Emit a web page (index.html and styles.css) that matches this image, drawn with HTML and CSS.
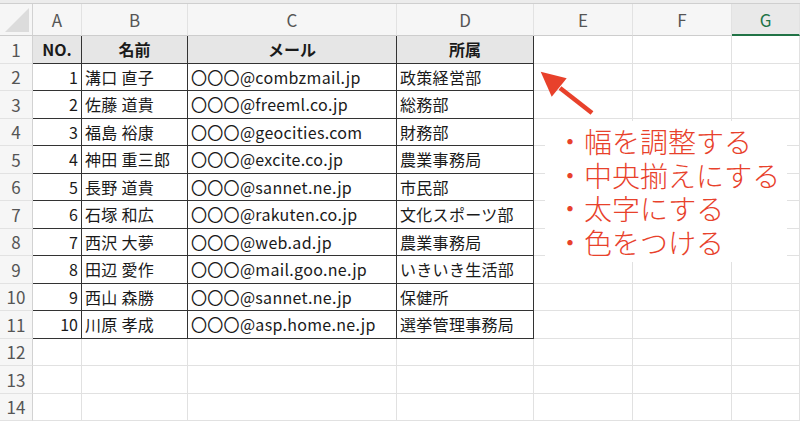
FILE: index.html
```html
<!DOCTYPE html>
<html lang="ja">
<head>
<meta charset="utf-8">
<link rel="stylesheet" href="styles.css">
</head>
<body>
<div class="sheet">
  <div class="topstrip"></div>
  <div class="grid">
    <div class="ch corner"><span class="tri"></span></div>
    <div class="ch">A</div><div class="ch">B</div><div class="ch">C</div><div class="ch">D</div><div class="ch">E</div><div class="ch">F</div><div class="ch sel">G</div>

    <div class="rh">1</div>
    <div class="c t th">NO.</div><div class="c t th">名前</div><div class="c t th">メール</div><div class="c t th">所属</div><div class="c"></div><div class="c"></div><div class="c"></div>

    <div class="rh">2</div>
    <div class="c t num">1</div><div class="c t">溝口 直子</div><div class="c t">〇〇〇@combzmail.jp</div><div class="c t">政策経営部</div><div class="c"></div><div class="c"></div><div class="c"></div>

    <div class="rh">3</div>
    <div class="c t num">2</div><div class="c t">佐藤 道貴</div><div class="c t">〇〇〇@freeml.co.jp</div><div class="c t">総務部</div><div class="c"></div><div class="c"></div><div class="c"></div>

    <div class="rh">4</div>
    <div class="c t num">3</div><div class="c t">福島 裕康</div><div class="c t">〇〇〇@geocities.com</div><div class="c t">財務部</div><div class="c"></div><div class="c"></div><div class="c"></div>

    <div class="rh">5</div>
    <div class="c t num">4</div><div class="c t">神田 重三郎</div><div class="c t">〇〇〇@excite.co.jp</div><div class="c t">農業事務局</div><div class="c"></div><div class="c"></div><div class="c"></div>

    <div class="rh">6</div>
    <div class="c t num">5</div><div class="c t">長野 道貴</div><div class="c t">〇〇〇@sannet.ne.jp</div><div class="c t">市民部</div><div class="c"></div><div class="c"></div><div class="c"></div>

    <div class="rh">7</div>
    <div class="c t num">6</div><div class="c t">石塚 和広</div><div class="c t">〇〇〇@rakuten.co.jp</div><div class="c t">文化スポーツ部</div><div class="c"></div><div class="c"></div><div class="c"></div>

    <div class="rh">8</div>
    <div class="c t num">7</div><div class="c t">西沢 大夢</div><div class="c t">〇〇〇@web.ad.jp</div><div class="c t">農業事務局</div><div class="c"></div><div class="c"></div><div class="c"></div>

    <div class="rh">9</div>
    <div class="c t num">8</div><div class="c t">田辺 愛作</div><div class="c t">〇〇〇@mail.goo.ne.jp</div><div class="c t">いきいき生活部</div><div class="c"></div><div class="c"></div><div class="c"></div>

    <div class="rh">10</div>
    <div class="c t num">9</div><div class="c t">西山 森勝</div><div class="c t">〇〇〇@sannet.ne.jp</div><div class="c t">保健所</div><div class="c"></div><div class="c"></div><div class="c"></div>

    <div class="rh">11</div>
    <div class="c t num">10</div><div class="c t">川原 孝成</div><div class="c t">〇〇〇@asp.home.ne.jp</div><div class="c t">選挙管理事務局</div><div class="c"></div><div class="c"></div><div class="c"></div>

    <div class="rh">12</div>
    <div class="c"></div><div class="c"></div><div class="c"></div><div class="c"></div><div class="c"></div><div class="c"></div><div class="c"></div>
    <div class="rh">13</div>
    <div class="c"></div><div class="c"></div><div class="c"></div><div class="c"></div><div class="c"></div><div class="c"></div><div class="c"></div>
    <div class="rh">14</div>
    <div class="c"></div><div class="c"></div><div class="c"></div><div class="c"></div><div class="c"></div><div class="c"></div><div class="c"></div>
  </div>

  <svg class="arrow" width="70" height="60" viewBox="0 0 70 60">
    <line x1="20" y1="18" x2="52" y2="43" stroke="#e8412b" stroke-width="4.5" stroke-linecap="butt"/>
    <polygon points="0.7,1.7 26.7,8.3 11.7,26.7" fill="#e8412b"/>
  </svg>

  <div class="note">
    <div class="line">・幅を調整する</div>
    <div class="line">・中央揃えにする</div>
    <div class="line">・太字にする</div>
    <div class="line">・色をつける</div>
  </div>
</div>
</body>
</html>
```

FILE: styles.css
```css
html, body {
  margin: 0;
  padding: 0;
  background: #ffffff;
}

.sheet {
  position: relative;
  width: 800px;
  height: 424px;
  overflow: hidden;
  font-family: "Noto Sans CJK JP", sans-serif;
  font-size: 16px;
  color: #1a1a1a;
}

.topstrip {
  height: 4px;
  background: #ececec;
  border-bottom: 1px solid #cfcfcf;
  box-sizing: border-box;
}

.grid {
  display: grid;
  grid-template-columns: 33px 49px 106px 209px 137px 99px 99px 68px;
  grid-template-rows: 32px repeat(14, 27.5px);
}

.ch {
  background: #f6f6f6;
  border-right: 1px solid #e2e2e2;
  border-bottom: 1px solid #cdcdcd;
  color: #555555;
  font-size: 17px;
  display: flex;
  align-items: center;
  justify-content: center;
  box-sizing: border-box;
}

.ch.corner {
  position: relative;
  border-right: 1px solid #d2d2d2;
}

.tri {
  position: absolute;
  right: 3px;
  bottom: 3px;
  width: 0;
  height: 0;
  border-left: 24px solid transparent;
  border-bottom: 24px solid #dcdcdc;
}

.ch.sel {
  background: #e9e9e9;
  color: #217346;
  border-bottom: 2px solid #217346;
}

.rh {
  background: #f6f6f6;
  border-right: 1px solid #d2d2d2;
  border-bottom: 1px solid #e2e2e2;
  color: #555555;
  font-size: 17px;
  display: flex;
  align-items: center;
  justify-content: center;
  box-sizing: border-box;
}

.c {
  border-right: 1px solid #e1e1e1;
  border-bottom: 1px solid #e1e1e1;
  box-sizing: border-box;
  display: flex;
  align-items: center;
  padding: 0 3px;
  white-space: nowrap;
  overflow: hidden;
  letter-spacing: 0.3px;
}

.c.t {
  border-right: 1px solid #333333;
  border-bottom: 1px solid #333333;
}

.c.th {
  background: #e6e6e6;
  font-weight: bold;
  justify-content: center;
  letter-spacing: 0;
}

.c.num {
  justify-content: flex-end;
  letter-spacing: 0;
}

.arrow {
  position: absolute;
  left: 540px;
  top: 70px;
}

.note {
  position: absolute;
  left: 545px;
  top: 121px;
  width: 242px;
  height: 141px;
  box-sizing: border-box;
  padding: 4px 0 0 11px;
  background: #ffffff;
  color: #e8412b;
  font-size: 28px;
  font-weight: 300;
  white-space: nowrap;
}

.line {
  height: 33.5px;
  line-height: 33.5px;
}
```
